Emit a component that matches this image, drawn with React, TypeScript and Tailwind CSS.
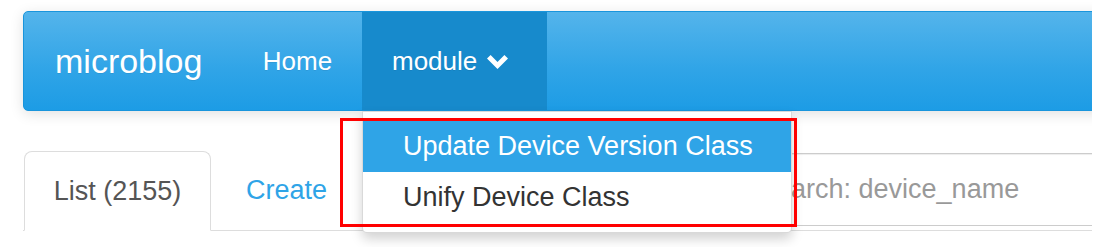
import React from "react";

function Chevron() {
  return (
    <svg width="21" height="14" viewBox="0 0 21 14" className="ml-[10px] mt-[2px]">
      <polygon points="0,3.6 3.6,0 10.5,6.9 17.4,0 21,3.6 10.5,14" fill="#ffffff" />
    </svg>
  );
}

export default function App() {
  return (
    <div className="relative w-[1101px] h-[247px] bg-white overflow-hidden font-['Liberation_Sans',Arial,sans-serif]">
      <div className="w-[1092px] h-full overflow-hidden">
        <div className="w-[1130px] pl-[23px] pt-[11px]">
          <nav className="relative z-10 h-[100px] rounded-[5px] border border-[#1995dc] bg-[linear-gradient(#54b4eb,#2fa4e7_60%,#1d9ce5)] shadow-[0_3px_14px_rgba(0,0,0,0.12)] flex items-stretch text-white [text-shadow:0_1px_0_rgba(0,0,0,0.08)]">
            <div className="flex items-center w-[209px] pl-[31px] text-[34px]">microblog</div>
            <div className="flex items-center justify-center w-[129px] text-[26px]">Home</div>
            <div className="relative flex items-center w-[185px] pl-[30px] bg-[#178acc] text-[26px]">
              <span>module</span>
              <Chevron />
              <div className="absolute left-0 top-full mt-[1px] w-[430px] bg-white border border-[rgba(0,0,0,0.15)] rounded-b-[5px] shadow-[0_6px_12px_rgba(0,0,0,0.175)] py-[9px] [text-shadow:none]">
                <div className="h-[51px] flex items-center pl-[40px] text-[27px] bg-[#2fa4e7] text-white">Update Device Version Class</div>
                <div className="h-[51px] flex items-center pl-[40px] text-[27px] text-[#333]">Unify Device Class</div>
              </div>
            </div>
          </nav>

          <div className="mt-[40px] flex items-start border-b border-[#ddd] pl-[1px]">
            <div className="-mb-px w-[187px] h-[80px] flex items-center justify-center border border-[#ddd] border-b-white rounded-t-[8px] bg-white text-[27px] text-[#555]">
              List (2155)
            </div>
            <div className="ml-[2px] h-[79px] flex items-center px-[33px] text-[27px] text-[#2fa4e7]">Create</div>
            <div className="ml-auto mt-[2px] w-[393px] h-[73px] border border-[#ccc] shadow-[inset_0_1px_1px_rgba(0,0,0,0.075)] flex items-center pl-[20px] text-[27px] text-[#999]">
              Search: device_name
            </div>
          </div>
        </div>
      </div>
      <div className="absolute left-[340px] top-[118px] w-[457px] h-[109px] border-[3px] border-[#ff0000] z-20 pointer-events-none" />
    </div>
  );
}
